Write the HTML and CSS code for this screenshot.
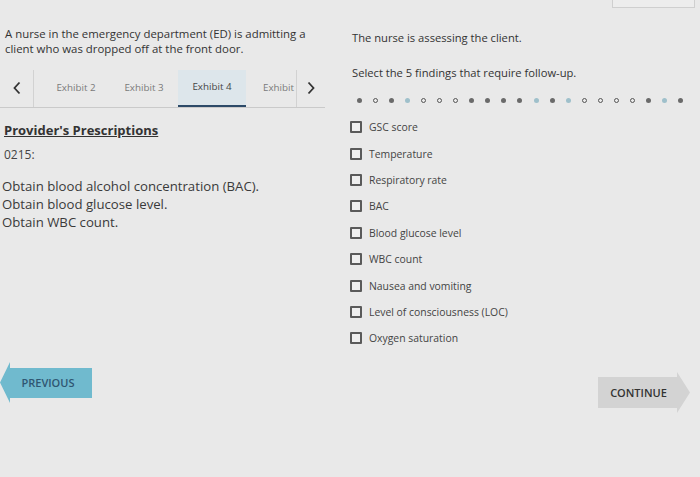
FILE: index.html
```html
<!DOCTYPE html>
<html lang="en">
<head>
<meta charset="utf-8">
<title>Exhibit question</title>
<link rel="stylesheet" href="styles.css">
</head>
<body>
<div class="page">
  <div class="topbar"><div class="topbox"></div></div>
  <div class="main">
    <section class="left">
      <p class="intro">A nurse in the emergency department (ED) is admitting a client who was dropped off at the front door.</p>
      <div class="tabbar">
        <div class="nav-arrow prev-arrow">
          <svg width="10" height="14" viewBox="0 0 10 14"><path d="M7.5 1.5 L2.5 7 L7.5 12.5" fill="none" stroke="#333" stroke-width="1.8"/></svg>
        </div>
        <div class="tabs">
          <div class="tab">Exhibit 2</div>
          <div class="tab">Exhibit 3</div>
          <div class="tab active">Exhibit 4</div>
          <div class="tab">Exhibit 5</div>
        </div>
        <div class="nav-arrow next-arrow">
          <svg width="10" height="14" viewBox="0 0 10 14"><path d="M2.5 1.5 L7.5 7 L2.5 12.5" fill="none" stroke="#333" stroke-width="1.8"/></svg>
        </div>
      </div>
      <h2 class="heading">Provider's Prescriptions</h2>
      <p class="time">0215:</p>
      <p class="orders">Obtain blood alcohol concentration (BAC).<br>Obtain blood glucose level.<br>Obtain WBC count.</p>
    </section>
    <section class="right">
      <p class="stem">The nurse is assessing the client.</p>
      <p class="stem select">Select the 5 findings that require follow-up.</p>
      <div class="dots">
        <span class="dot"></span><span class="dot ring"></span><span class="dot"></span><span class="dot blue"></span><span class="dot ring"></span><span class="dot ring"></span><span class="dot ring"></span><span class="dot"></span><span class="dot"></span><span class="dot"></span><span class="dot"></span><span class="dot blue"></span><span class="dot"></span><span class="dot blue"></span><span class="dot ring"></span><span class="dot ring"></span><span class="dot ring"></span><span class="dot ring"></span><span class="dot"></span><span class="dot blue"></span><span class="dot"></span>
      </div>
      <ul class="options">
        <li class="option"><span class="box"></span>GSC score</li>
        <li class="option"><span class="box"></span>Temperature</li>
        <li class="option"><span class="box"></span>Respiratory rate</li>
        <li class="option"><span class="box"></span>BAC</li>
        <li class="option"><span class="box"></span>Blood glucose level</li>
        <li class="option"><span class="box"></span>WBC count</li>
        <li class="option"><span class="box"></span>Nausea and vomiting</li>
        <li class="option"><span class="box"></span>Level of consciousness (LOC)</li>
        <li class="option"><span class="box"></span>Oxygen saturation</li>
      </ul>
    </section>
  </div>
  <div class="footer">
    <button class="btn btn-prev">PREVIOUS</button>
    <button class="btn btn-next">CONTINUE</button>
  </div>
</div>
</body>
</html>
```
FILE: styles.css
```css
* { box-sizing: border-box; }
html, body { margin: 0; padding: 0; }
body {
  background: #e9e9e9;
  font-family: "Open Sans", "Liberation Sans", sans-serif;
  color: #333;
}
.page {
  width: 700px;
  height: 477px;
  display: flex;
  flex-direction: column;
  overflow: hidden;
}
.topbar {
  height: 8px;
  display: flex;
  justify-content: flex-end;
  padding-right: 5px;
}
.topbox {
  width: 83px;
  height: 8px;
  border: 1px solid #cfcfcf;
  border-top: none;
  background: #ededed;
}
.main {
  display: grid;
  grid-template-columns: 350px 1fr;
}
.left { padding-left: 4px; }
.intro {
  margin: 17.5px 0 0 1px;
  font-size: 11.4px;
  line-height: 15px;
  width: 320px;
  color: #333;
}
.tabbar {
  margin: 14.5px 0 0 -4px;
  width: 325px;
  height: 38px;
  display: flex;
  border-bottom: 1px solid #cacaca;
}
.nav-arrow {
  display: flex;
  align-items: center;
  justify-content: center;
}
.prev-arrow {
  width: 34px;
  border-right: 1px solid #d2d2d2;
  padding-bottom: 2px;
}
.next-arrow {
  width: 29px;
  border-left: 1px solid #d2d2d2;
  padding-bottom: 2px;
}
.tabs {
  flex: 1;
  display: flex;
  overflow: hidden;
  padding-left: 8px;
}
.tab {
  flex: 0 0 68px;
  display: flex;
  align-items: center;
  justify-content: center;
  font-size: 9.8px;
  color: #7a7a7a;
  white-space: nowrap;
  padding-bottom: 2px;
}
.tab:last-child {
  justify-content: flex-start;
  padding-left: 17px;
}
.tab.active {
  background: #dde6eb;
  color: #444;
  border-bottom: 2px solid #2c4a68;
}
.heading {
  margin: 13px 0 0 0;
  font-size: 13px;
  line-height: 18px;
  font-weight: 700;
  text-decoration: underline;
  color: #333;
}
.time {
  margin: 7px 0 0 0;
  font-size: 12px;
  line-height: 18px;
  color: #444;
}
.orders {
  margin: 13px 0 0 -2px;
  font-size: 13.2px;
  line-height: 18px;
  color: #3a3a3a;
}
.stem {
  margin: 21.5px 0 0 2px;
  font-size: 11.2px;
  line-height: 15px;
  color: #333;
}
.stem.select { margin-top: 20px; }
.dots {
  margin: 17.5px 0 0 7px;
  height: 6px;
  display: flex;
  align-items: center;
  gap: 11.05px;
}
.dot {
  width: 5px;
  height: 5px;
  border-radius: 50%;
  background: #6a6a6a;
  flex: none;
}
.dot.ring {
  background: #ececec;
  border: 1.5px solid #555;
}
.dot.blue { background: #9fc0cb; }
.options {
  list-style: none;
  margin: 11px 0 0 0;
  padding: 0;
}
.option {
  height: 26.4px;
  display: flex;
  align-items: center;
  font-size: 10.4px;
  color: #444;
}
.box {
  width: 12px;
  height: 12px;
  border: 2px solid #5a5a5a;
  border-radius: 1px;
  background: #efefef;
  margin-right: 7px;
  flex: none;
}
.footer {
  margin-top: auto;
  height: 115px;
  padding: 0 10px 0 0;
  display: flex;
  justify-content: space-between;
  align-items: flex-start;
}
.btn {
  border: none;
  font-family: "Open Sans", "Liberation Sans", sans-serif;
  font-weight: 600;
  font-size: 11px;
  padding: 0;
  cursor: pointer;
}
.btn-prev {
  width: 92px;
  height: 41px;
  background: #70bace;
  color: #2f5672;
  padding-left: 4px;
  clip-path: polygon(10px 0, 10px 6px, 92px 6px, 92px 36px, 10px 36px, 10px 41px, 0 20.5px);
}
.btn-next {
  margin-top: 10px;
  width: 92px;
  height: 41px;
  background: #d3d3d3;
  color: #333;
  padding-right: 11px;
  clip-path: polygon(0 5px, 79px 5px, 79px 0, 92px 20.5px, 79px 41px, 79px 36px, 0 36px);
}
```
